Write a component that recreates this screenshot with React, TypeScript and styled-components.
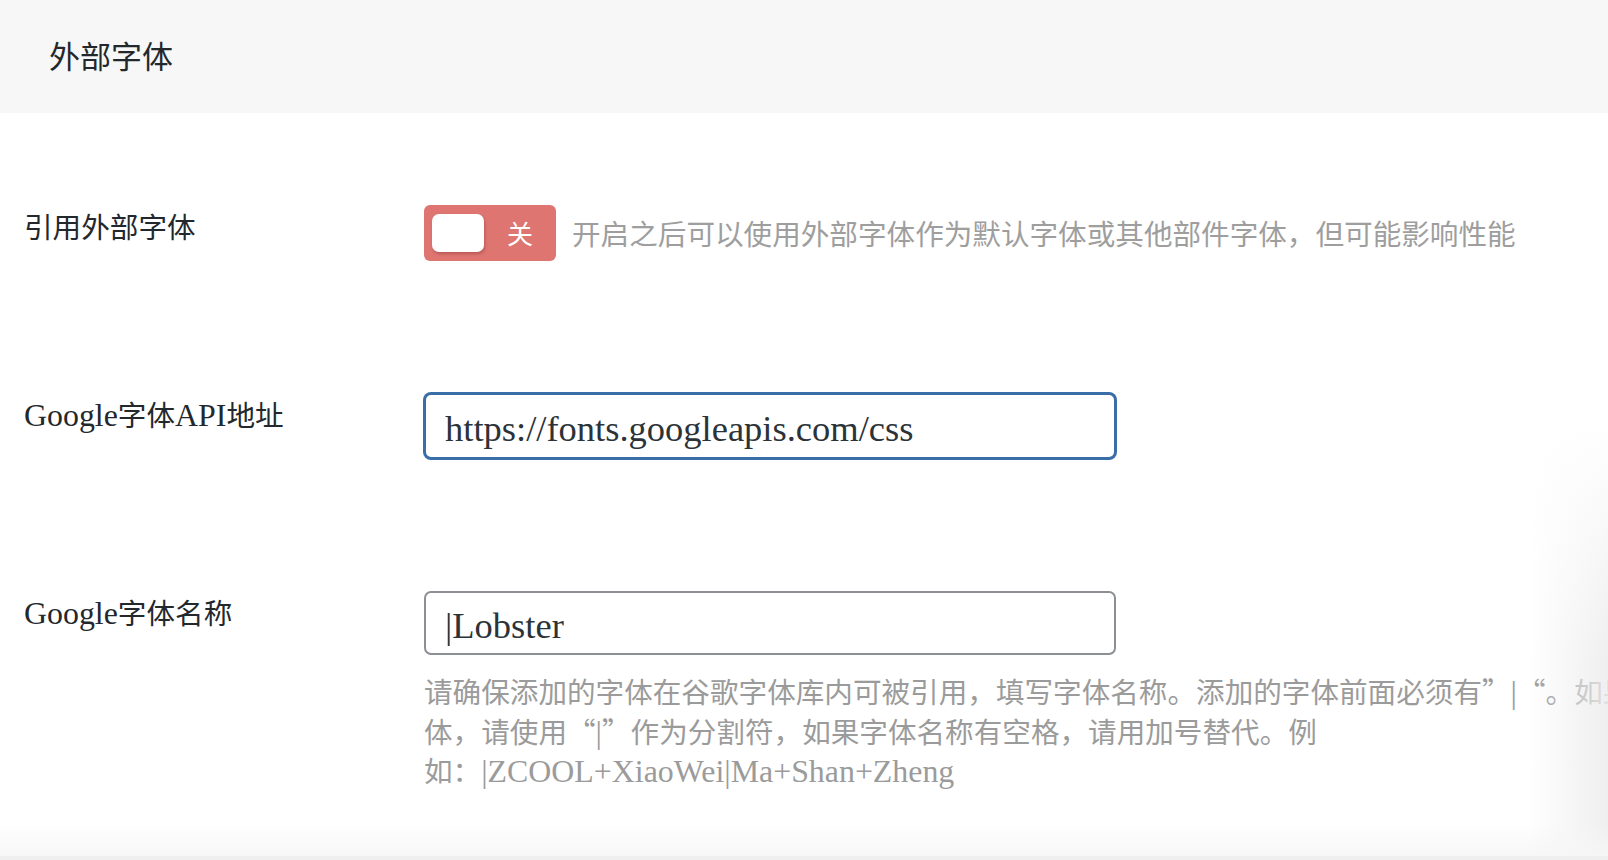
import React from "react";
import styled, { createGlobalStyle } from "styled-components";

const GlobalStyle = createGlobalStyle`
  html, body {
    margin: 0;
    padding: 0;
    background: #ffffff;
    overflow: hidden;
  }
  body {
    font-family: "Noto Sans CJK SC", "Liberation Serif", sans-serif;
    color: #2c3338;
  }
  * { box-sizing: border-box; }
`;

const Page = styled.div`
  position: relative;
  width: 100%;
  height: 100vh;
  overflow: hidden;
  background: #ffffff;
`;

const Header = styled.header`
  height: 113px;
  background: #f7f7f7;
  display: flex;
  align-items: center;
  padding: 0 0 4px 49px;
  font-size: 31px;
  color: #23282d;
`;

const Form = styled.div`
  padding: 26px 0 0 24px;
`;

const Row = styled.div`
  display: grid;
  grid-template-columns: 400px 1fr;
  align-items: start;
  padding: 66px 0;
`;

const Label = styled.div`
  padding-top: 1px;
  font-size: 28.6px;
  line-height: 40px;
  color: #23282d;
  white-space: nowrap;
`;

const Latin = styled.span`
  font-family: "Liberation Serif", serif;
  font-size: 1.115em;
  line-height: 1;
`;

const Control = styled.div`
  display: flex;
  flex-direction: column;
  align-items: flex-start;
`;

const InlineControl = styled.div`
  display: flex;
  align-items: center;
  gap: 16px;
`;

const Toggle = styled.div`
  width: 132px;
  height: 56px;
  border-radius: 6px;
  background: #de7571;
  display: flex;
  align-items: center;
  padding-left: 8px;
  flex-shrink: 0;
`;

const Knob = styled.span`
  width: 52px;
  height: 38px;
  border-radius: 7px;
  background: #ffffff;
  box-shadow: 1px 2px 3px rgba(120, 40, 40, 0.35);
  flex-shrink: 0;
`;

const ToggleText = styled.span`
  flex: 1;
  text-align: center;
  color: #ffffff;
  font-size: 26px;
  line-height: 1;
`;

const Hint = styled.span`
  font-size: 28.6px;
  line-height: 40px;
  color: #9e9e9e;
  white-space: nowrap;
`;

const Input = styled.div<{ $focused?: boolean }>`
  width: 692px;
  height: ${(p) => (p.$focused ? 66 : 64)}px;
  border: 2px solid ${(p) => (p.$focused ? "#3a6ea8" : "#8c8f94")};
  border-radius: 7px;
  box-shadow: ${(p) => (p.$focused ? "0 0 0 1px #3a6ea8" : "none")};
  display: flex;
  align-items: center;
  padding: 5px 0 0 19px;
  font-family: "Liberation Serif", serif;
  font-size: 36.5px;
  color: #2c3338;
  white-space: nowrap;
  background: #ffffff;
`;

const Help = styled.div`
  margin-top: 16px;
  font-size: 28.6px;
  line-height: 39.5px;
  color: #9b9b9b;
`;

const HelpLine = styled.div`
  white-space: nowrap;
  height: 39.5px;
`;

const RightFade = styled.div`
  position: absolute;
  top: 420px;
  right: 0;
  bottom: 0;
  width: 80px;
  pointer-events: none;
  background: linear-gradient(to right, rgba(240, 240, 240, 0), rgba(236, 236, 236, 0.85));
  -webkit-mask-image: linear-gradient(to bottom, transparent, #000 55%);
  mask-image: linear-gradient(to bottom, transparent, #000 55%);
`;

const BottomFade = styled.div`
  position: absolute;
  left: 0;
  right: 0;
  bottom: 0;
  height: 36px;
  pointer-events: none;
  background: linear-gradient(to bottom, rgba(246, 246, 246, 0), rgba(246, 246, 246, 0.9) 88%, #efefef 90%, #efefef);
`;

export default function App() {
  return (
    <>
      <GlobalStyle />
      <Page>
        <Header>外部字体</Header>
        <Form>
          <Row>
            <Label>引用外部字体</Label>
            <InlineControl>
              <Toggle>
                <Knob />
                <ToggleText>关</ToggleText>
              </Toggle>
              <Hint>开启之后可以使用外部字体作为默认字体或其他部件字体，但可能影响性能</Hint>
            </InlineControl>
          </Row>
          <Row>
            <Label>
              <Latin>Google</Latin>字体<Latin>API</Latin>地址
            </Label>
            <Control>
              <Input $focused>https://fonts.googleapis.com/css</Input>
            </Control>
          </Row>
          <Row>
            <Label>
              <Latin>Google</Latin>字体名称
            </Label>
            <Control>
              <Input>|Lobster</Input>
              <Help>
                <HelpLine>
                  请确保添加的字体在谷歌字体库内可被引用，填写字体名称。添加的字体前面必须有”<Latin>|</Latin>“。如果有多个字
                </HelpLine>
                <HelpLine>
                  体，请使用“<Latin>|</Latin>”作为分割符，如果字体名称有空格，请用加号替代。例
                </HelpLine>
                <HelpLine>
                  如：<Latin>|ZCOOL+XiaoWei|Ma+Shan+Zheng</Latin>
                </HelpLine>
              </Help>
            </Control>
          </Row>
        </Form>
        <RightFade />
        <BottomFade />
      </Page>
    </>
  );
}
